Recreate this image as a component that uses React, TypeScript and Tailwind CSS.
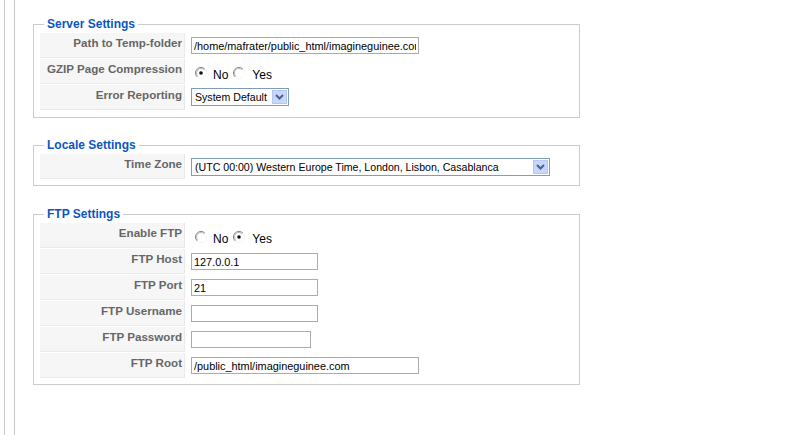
import type { ReactNode } from 'react';

const Radio = ({ checked }: { checked?: boolean }) => (
  <svg width="12" height="12" viewBox="0 0 12 12" className="shrink-0">
    <circle cx="6" cy="6" r="5" fill="#fff" />
    <path d="M2.1 9.9 A5.5 5.5 0 0 1 9.9 2.1" fill="none" stroke="#808080" strokeWidth="1" />
    <path d="M2.8 9.2 A4.5 4.5 0 0 1 9.2 2.8" fill="none" stroke="#bdbdbd" strokeWidth="1" />
    <path d="M9.9 2.1 A5.5 5.5 0 0 1 2.1 9.9" fill="none" stroke="#f4f4f4" strokeWidth="1" />
    {checked && <circle cx="6" cy="6" r="1.8" fill="#111" />}
  </svg>
);

const Chevron = () => (
  <svg width="9" height="6" viewBox="0 0 9 6">
    <path d="M1 1 L4.5 4.5 L8 1" fill="none" stroke="#4d6185" strokeWidth="2" />
  </svg>
);

const Select = ({ value, width }: { value: string; width: string }) => (
  <div className={`flex h-[18px] items-center border border-[#7f9db9] bg-white ${width}`}>
    <span className="flex-1 truncate pl-[3px] text-[10.6px] leading-[14px] text-black">{value}</span>
    <span className="mr-px flex h-[14px] w-[15px] items-center justify-center border border-[#b6c8ef] bg-[#c6d6fc]">
      <Chevron />
    </span>
  </div>
);

const Field = ({ value = '', width }: { value?: string; width: string }) => (
  <input
    readOnly
    value={value}
    className={`block h-[17px] border border-[#a5acb2] bg-white px-[2px] text-[10.9px] leading-[15px] text-black outline-none ${width}`}
  />
);

const RadioPair = ({ yes }: { yes?: boolean }) => (
  <div className="flex items-center pt-[2px] text-[12px] leading-[14px] text-black">
    <span className="ml-[4px] mt-[-2px]"><Radio checked={!yes} /></span>
    <span className="ml-[6px] mt-[3px]">No</span>
    <span className="ml-[5px] mt-[-2px]"><Radio checked={yes} /></span>
    <span className="ml-[7px] mt-[3px]">Yes</span>
  </div>
);

const Row = ({ label, children }: { label: string; children: ReactNode }) => (
  <div className="flex h-[25px] gap-px">
    <div className="w-[145px] shrink-0 border-r border-b border-[#e9e9e9] bg-[#f6f6f6] pt-[3px] pr-[2px] text-right text-[11.6px] leading-[13px] font-bold text-[#666]">
      {label}
    </div>
    <div className="flex items-start pt-[4px] pl-[5px]">{children}</div>
  </div>
);

const Section = ({ title, children, className = '' }: { title: string; children: ReactNode; className?: string }) => (
  <fieldset className={`w-[547px] border border-[#ccc] pt-[2px] pr-[6px] pb-[6px] pl-[6px] ${className}`}>
    <legend className="ml-[4px] px-[3px] text-[12px] leading-[14px] font-bold text-[#0b55c4]">{title}</legend>
    <div className="flex flex-col gap-px">{children}</div>
  </fieldset>
);

export default function App() {
  return (
    <div className="min-h-[435px] bg-white font-['Liberation_Sans',Arial,sans-serif]">
      <div className="ml-[4px] min-h-[435px] border-l border-[#c8c8c8] pl-[9px]">
        <div className="min-h-[435px] border-l border-[#c8c8c8] pt-[17px] pl-[18px]">
          <Section title="Server Settings" className="pb-[7px]">
            <Row label="Path to Temp-folder">
              <Field value="/home/mafrater/public_html/imagineguinee.com/tmp" width="w-[228px]" />
            </Row>
            <Row label="GZIP Page Compression">
              <RadioPair />
            </Row>
            <Row label="Error Reporting">
              <div className="mt-[-1px]">
                <Select value="System Default" width="w-[98px]" />
              </div>
            </Row>
          </Section>

          <Section title="Locale Settings" className="mt-[20px]">
            <Row label="Time Zone">
              <Select value="(UTC 00:00) Western Europe Time, London, Lisbon, Casablanca" width="w-[359px]" />
            </Row>
          </Section>

          <Section title="FTP Settings" className="mt-[21px] pb-[5px]">
            <Row label="Enable FTP">
              <RadioPair yes />
            </Row>
            <Row label="FTP Host">
              <Field value="127.0.0.1" width="w-[127px]" />
            </Row>
            <Row label="FTP Port">
              <Field value="21" width="w-[127px]" />
            </Row>
            <Row label="FTP Username">
              <Field width="w-[127px]" />
            </Row>
            <Row label="FTP Password">
              <Field width="w-[120px]" />
            </Row>
            <Row label="FTP Root">
              <Field value="/public_html/imagineguinee.com" width="w-[228px]" />
            </Row>
          </Section>
        </div>
      </div>
    </div>
  );
}
